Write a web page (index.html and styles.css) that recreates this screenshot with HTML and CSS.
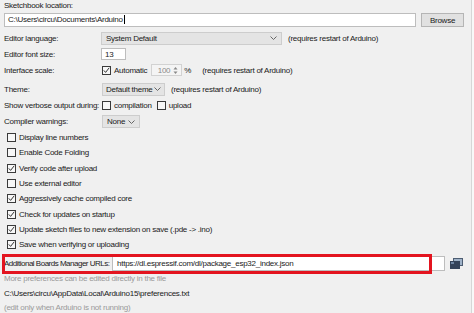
FILE: index.html
```html
<!DOCTYPE html>
<html>
<head>
<meta charset="utf-8">
<link rel="stylesheet" href="styles.css">
</head>
<body>
<div class="pane">
  <div class="caption">Sketchbook location:</div>
  <div class="path-row">
    <div class="field path">C:\Users\circu\Documents\Arduino<span class="caret"></span></div>
    <div class="button">Browse</div>
  </div>

  <div class="form">
    <div class="row">
      <div class="label">Editor language:</div>
      <div class="select lang"><span>System Default</span><svg class="chev" width="7" height="4" viewBox="0 0 7 4"><polyline points="0.5,0.5 3.5,3.5 6.5,0.5" fill="none" stroke="#666" stroke-width="1"/></svg></div>
      <div class="note note-lang">(requires restart of Arduino)</div>
    </div>
    <div class="row">
      <div class="label">Editor font size:</div>
      <div class="field size">13</div>
    </div>
    <div class="row">
      <div class="label">Interface scale:</div>
      <span class="box first"><svg width="7" height="7" viewBox="0 0 7 7"><polyline points="0.8,3.4 2.6,5.4 6.2,0.8" fill="none" stroke="#333" stroke-width="1"/></svg></span>
      <span class="opt">Automatic</span>
      <div class="spin"><span class="spin-val">100</span><svg class="spin-arrows" width="5" height="9" viewBox="0 0 5 9"><polygon points="2.5,1 4.5,3.5 0.5,3.5" fill="#888"/><polygon points="2.5,8 4.5,5.5 0.5,5.5" fill="#888"/></svg></div>
      <span class="pct">%</span>
      <div class="note note-scale">(requires restart of Arduino)</div>
    </div>
    <div class="row theme-row">
      <div class="label">Theme:</div>
      <div class="select theme"><span>Default theme</span><svg class="chev" width="7" height="4" viewBox="0 0 7 4"><polyline points="0.5,0.5 3.5,3.5 6.5,0.5" fill="none" stroke="#666" stroke-width="1"/></svg></div>
      <div class="note note-theme">(requires restart of Arduino)</div>
    </div>
    <div class="row">
      <div class="label">Show verbose output during:</div>
      <span class="box first"></span>
      <span class="opt">compilation</span>
      <span class="box second"></span>
      <span class="opt">upload</span>
    </div>
    <div class="row">
      <div class="label">Compiler warnings:</div>
      <div class="select warn"><span>None</span><svg class="chev" width="7" height="4" viewBox="0 0 7 4"><polyline points="0.5,0.5 3.5,3.5 6.5,0.5" fill="none" stroke="#666" stroke-width="1"/></svg></div>
    </div>
  </div>

  <div class="checks">
    <div class="check-row"><span class="box"></span><span class="opt">Display line numbers</span></div>
    <div class="check-row"><span class="box"></span><span class="opt">Enable Code Folding</span></div>
    <div class="check-row"><span class="box"><svg width="7" height="7" viewBox="0 0 7 7"><polyline points="0.8,3.4 2.6,5.4 6.2,0.8" fill="none" stroke="#333" stroke-width="1"/></svg></span><span class="opt">Verify code after upload</span></div>
    <div class="check-row"><span class="box"></span><span class="opt">Use external editor</span></div>
    <div class="check-row"><span class="box"><svg width="7" height="7" viewBox="0 0 7 7"><polyline points="0.8,3.4 2.6,5.4 6.2,0.8" fill="none" stroke="#333" stroke-width="1"/></svg></span><span class="opt">Aggressively cache compiled core</span></div>
    <div class="check-row"><span class="box"><svg width="7" height="7" viewBox="0 0 7 7"><polyline points="0.8,3.4 2.6,5.4 6.2,0.8" fill="none" stroke="#333" stroke-width="1"/></svg></span><span class="opt">Check for updates on startup</span></div>
    <div class="check-row"><span class="box"><svg width="7" height="7" viewBox="0 0 7 7"><polyline points="0.8,3.4 2.6,5.4 6.2,0.8" fill="none" stroke="#333" stroke-width="1"/></svg></span><span class="opt">Update sketch files to new extension on save (.pde -&gt; .ino)</span></div>
    <div class="check-row"><span class="box"><svg width="7" height="7" viewBox="0 0 7 7"><polyline points="0.8,3.4 2.6,5.4 6.2,0.8" fill="none" stroke="#333" stroke-width="1"/></svg></span><span class="opt">Save when verifying or uploading</span></div>
  </div>

  <div class="url-row">
    <div class="url-label">Additional Boards Manager URLs:</div>
    <div class="field url">https://dl.espressif.com/dl/package_esp32_index.json</div>
    <div class="url-btn"><svg width="13" height="11" viewBox="0 0 13 11"><rect x="3.5" y="0.5" width="9" height="7" fill="#9fb2c8" stroke="#4d5d72"/><rect x="0" y="3" width="10" height="8" fill="#34435a"/><rect x="1" y="4" width="3" height="2" fill="#6f86a3"/></svg></div>
    <div class="highlight"></div>
  </div>

  <div class="notes">
    <div class="muted">More preferences can be edited directly in the file</div>
    <div>C:\Users\circu\AppData\Local\Arduino15\preferences.txt</div>
    <div class="muted">(edit only when Arduino is not running)</div>
  </div>
</div>
</body>
</html>
```

FILE: styles.css
```css
html, body {
  margin: 0;
  padding: 0;
}

body {
  background: #f8f8f8;
  font-family: "Liberation Sans", Arial, sans-serif;
  font-size: 8px;
  letter-spacing: -0.25px;
  color: #1a1a1a;
  width: 474px;
  height: 313px;
  overflow: hidden;
}

.pane {
  width: 467px;
  height: 313px;
  padding-left: 4px;
  background: #f0f0f0;
  border-right: 1px solid #d6d6d6;
}

.caption {
  height: 12px;
  line-height: 12px;
}

.path-row {
  display: flex;
  align-items: center;
  height: 15px;
}

.field {
  box-sizing: border-box;
  background: #ffffff;
  border: 1px solid #bdbdbd;
  height: 14px;
  display: flex;
  align-items: center;
  padding-left: 3px;
  white-space: nowrap;
}

.path {
  width: 412px;
}

.caret {
  display: inline-block;
  width: 1px;
  height: 9px;
  background: #000;
  margin-left: 1px;
}

.button {
  box-sizing: border-box;
  margin-left: 5px;
  width: 43px;
  height: 14px;
  margin-top: 1px;
  background: #e1e1e1;
  border: 1px solid #b5b5b5;
  display: flex;
  align-items: center;
  justify-content: center;
}

.form {
  margin-top: 3px;
}

.row {
  display: flex;
  align-items: center;
  height: 16px;
  white-space: nowrap;
}

.theme-row {
  margin-top: 3px;
}

.label {
  width: 97px;
  flex: none;
}

.select {
  box-sizing: border-box;
  height: 13px;
  background: #e4e4e4;
  border: 1px solid #cdcdcd;
  display: flex;
  align-items: center;
  justify-content: space-between;
  padding: 0 4px 0 4px;
  flex: none;
}

.lang {
  width: 181px;
}

.theme {
  width: 63px;
  margin-left: 1px;
  padding-left: 3px;
  padding-right: 3px;
}

.warn {
  width: 38px;
  margin-top: 1px;
  margin-left: 1px;
}

.chev {
  display: block;
  flex: none;
}

.note-lang {
  margin-left: 6px;
}

.note-theme {
  margin-left: 6px;
}

.note-scale {
  margin-left: 11px;
}

.size {
  width: 25px;
  height: 12px;
}

.box {
  box-sizing: border-box;
  width: 9px;
  height: 9px;
  border: 1px solid #3a3a3a;
  background: #f7f7f7;
  display: inline-flex;
  align-items: center;
  justify-content: center;
  flex: none;
}

.box svg {
  display: block;
}

.box.first {
  margin-left: 1px;
}

.box.second {
  margin-left: 5px;
}

.opt {
  margin-left: 3px;
}

.spin {
  box-sizing: border-box;
  margin-left: 4px;
  width: 31px;
  height: 12px;
  background: #f4f4f4;
  border: 1px solid #d2d2d2;
  display: flex;
  align-items: center;
  justify-content: flex-end;
  padding-right: 3px;
  color: #8a8a8a;
  flex: none;
}

.spin-val {
  margin-right: 3px;
}

.spin-arrows {
  display: block;
}

.pct {
  margin-left: 2px;
}

.checks {
  margin-top: 1px;
  padding-left: 3px;
}

.check-row {
  display: flex;
  align-items: center;
  height: 15.3px;
  white-space: nowrap;
}

.url-row {
  position: relative;
  display: flex;
  align-items: flex-start;
  height: 18px;
  margin-top: 2px;
  padding-top: 2px;
  box-sizing: border-box;
}

.url-label {
  width: 108px;
  flex: none;
  height: 15px;
  line-height: 15px;
  white-space: nowrap;
  letter-spacing: -0.5px;
}

.url {
  width: 333px;
  height: 15px;
  padding-left: 4px;
  flex: none;
}

.url-btn {
  margin-left: 5px;
  margin-top: 2px;
  width: 13px;
  height: 11px;
}

.url-btn svg {
  display: block;
}

.highlight {
  position: absolute;
  left: -2px;
  top: 0;
  width: 430px;
  height: 20px;
  box-sizing: border-box;
  border: 3px solid #e3141f;
}

.notes {
  margin-top: 0;
  line-height: 14.5px;
  white-space: nowrap;
}

.muted {
  color: #9a9a9a;
}
```
